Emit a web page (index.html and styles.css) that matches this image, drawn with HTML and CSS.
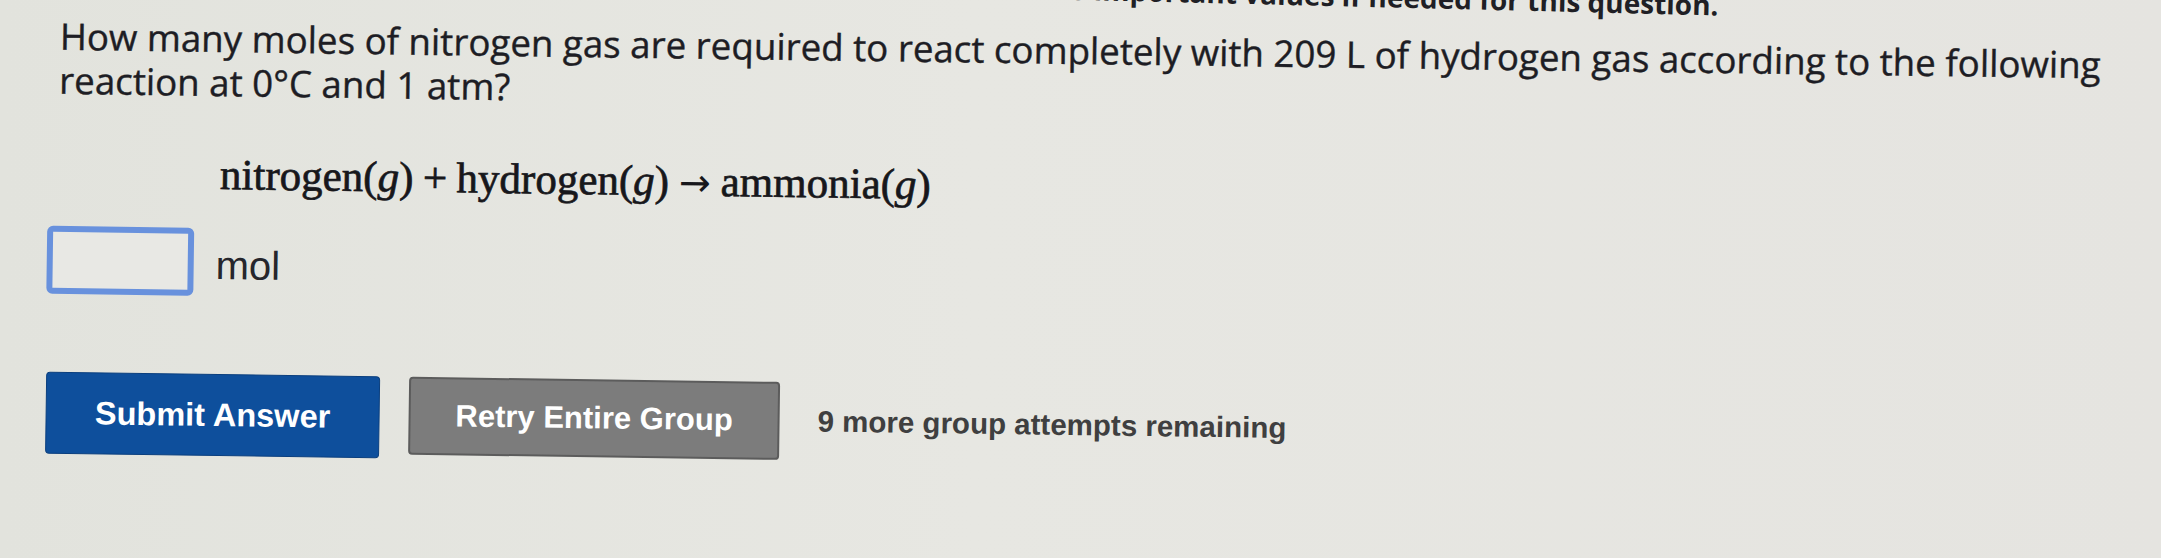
FILE: index.html
```html
<!DOCTYPE html>
<html lang="en">
<head>
<meta charset="utf-8">
<title>Question</title>
<link rel="stylesheet" href="styles.css">
</head>
<body>
<div class="page">
  <p class="refs">Use the References to access important values if needed for this question.</p>
  <p class="question">How many moles of nitrogen gas are required to react completely with 209 L of hydrogen gas according to the following reaction at 0°C and 1 atm?</p>
  <div class="equation">nitrogen(<i>g</i>)<span class="op">+</span>hydrogen(<i>g</i>)<span class="op arrow">→</span>ammonia(<i>g</i>)</div>
  <div class="answer-row">
    <div class="answer-box"></div>
    <span class="unit">mol</span>
  </div>
  <div class="actions">
    <button class="btn btn-submit" type="button">Submit Answer</button>
    <button class="btn btn-retry" type="button">Retry Entire Group</button>
    <span class="attempts">9 more group attempts remaining</span>
  </div>
</div>
</body>
</html>
```

FILE: styles.css
```css
html, body {
  margin: 0;
  padding: 0;
}

body {
  width: 2161px;
  height: 558px;
  overflow: hidden;
  background: linear-gradient(90deg, #e2e3dd 0%, #e7e7e2 45%, #e5e4e0 100%);
  font-family: "Open Sans", "Liberation Sans", sans-serif;
  color: #26262c;
}

.page {
  padding-left: 49px;
  transform: rotate(0.8deg);
  transform-origin: 0 200px;
}

.refs {
  margin: -29px 0 0 0;
  padding-right: 445px;
  text-align: right;
  font-size: 28px;
  line-height: 20px;
  font-weight: 700;
  color: #1f1f25;
  transform: rotate(0.6deg);
  transform-origin: 1716px 20px;
}

.question {
  width: 2100px;
  margin: 22px 0 0 9px;
  font-size: 36.7px;
  line-height: 44px;
  color: #1d1d24;
  -webkit-text-stroke: 0.4px #1d1d24;
}

.equation {
  margin: 46px 0 0 171px;
  font-family: "Liberation Serif", "DejaVu Serif", serif;
  font-size: 43px;
  line-height: 50px;
  color: #17171b;
  -webkit-text-stroke: 0.7px #17171b;
  white-space: nowrap;
}

.equation i {
  font-style: italic;
}

.op {
  display: inline-block;
  margin: 0 0.22em;
}

.op.arrow {
  margin: 0 0.26em;
  font-family: "DejaVu Sans", sans-serif;
  font-size: 38px;
  -webkit-text-stroke: 0;
}

.answer-row {
  display: flex;
  align-items: center;
  margin: 27px 0 0 -1px;
}

.answer-box {
  box-sizing: border-box;
  width: 147px;
  height: 68px;
  border: 6px solid #6891dd;
  border-radius: 6px;
  background: #e8e8e4;
}

.unit {
  margin: 6px 0 0 22px;
  font-family: "Liberation Sans", Arial, sans-serif;
  font-size: 40px;
  line-height: 40px;
  color: #26262c;
}

.actions {
  display: flex;
  align-items: flex-start;
  margin: 78px 0 0 0;
}

.btn {
  box-sizing: border-box;
  display: flex;
  align-items: center;
  justify-content: center;
  font-family: "Liberation Sans", Arial, sans-serif;
  font-weight: 700;
  font-size: 32.5px;
  color: #ffffff;
  border-radius: 4px;
  padding: 0;
}

.btn-submit {
  width: 334px;
  height: 82px;
  background: #0e4f9c;
  border: 1px solid #0b3f7e;
}

.btn-retry {
  width: 371px;
  height: 78px;
  margin: 0 0 0 29px;
  background: #7c7c7c;
  border: 2px solid #5c5c5c;
  font-size: 31px;
}

.attempts {
  margin: 22px 0 0 38px;
  font-family: "Liberation Sans", Arial, sans-serif;
  font-weight: 700;
  font-size: 29.5px;
  color: #3f3f40;
}
```
